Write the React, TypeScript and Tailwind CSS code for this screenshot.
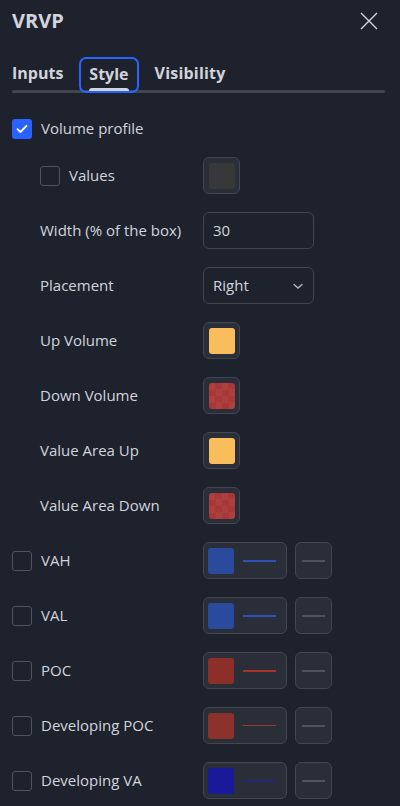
import React from 'react'

type LineRow = { label: string; swatch: string; line: string; thick: boolean }

const lineRows: LineRow[] = [
  { label: 'VAH', swatch: 'bg-[#2a4a9e]', line: 'bg-[#2f50b4]', thick: true },
  { label: 'VAL', swatch: 'bg-[#2a4a9e]', line: 'bg-[#2f50b4]', thick: true },
  { label: 'POC', swatch: 'bg-[#8c2f29]', line: 'bg-[#a9322b]', thick: true },
  { label: 'Developing POC', swatch: 'bg-[#8c322c]', line: 'bg-[#9a3a33]', thick: false },
  { label: 'Developing VA', swatch: 'bg-[#19199a]', line: 'bg-[#2020b0]', thick: false },
]

const Checkbox = ({ checked = false }: { checked?: boolean }) =>
  checked ? (
    <span className="flex h-5 w-5 shrink-0 items-center justify-center rounded-[3px] bg-[#2962ff]">
      <svg width="12" height="10" viewBox="0 0 12 10" fill="none">
        <path d="M1.5 5.2 4.4 8 10.5 1.8" stroke="#fff" strokeWidth="1.8" strokeLinecap="round" strokeLinejoin="round" />
      </svg>
    </span>
  ) : (
    <span className="h-5 w-5 shrink-0 rounded-[3px] border border-[#50535e]" />
  )

const Swatch = ({ inner }: { inner: string }) => (
  <div className="flex h-[37px] w-[37px] items-center justify-center rounded-md border border-[#434651] bg-[#2a2e39]">
    <div className={`h-[26px] w-[26px] rounded-[3px] ${inner}`} />
  </div>
)

const checker =
  'bg-[repeating-conic-gradient(#a83737_0_25%,#ad3f3f_0_50%)] bg-[length:13px_13px]'

const Row = ({ label, children }: { label: string; children: React.ReactNode }) => (
  <div className="flex h-[37px] items-center">
    <span className="w-[203px] shrink-0 pl-[40px]">{label}</span>
    {children}
  </div>
)

const App = () => {
  return (
    <div className="min-h-[806px] w-[400px] overflow-hidden bg-[#1e222d] font-['Open_Sans',sans-serif] text-[15px] text-[#d1d4dc]">
      <header className="flex h-[41px] items-center justify-between px-3">
        <h1 className="text-[20px] font-bold">VRVP</h1>
        <svg width="18" height="18" viewBox="0 0 18 18" className="mr-[10px]">
          <path d="M1 1 17 17M17 1 1 17" stroke="#d1d4dc" strokeWidth="1.4" />
        </svg>
      </header>

      <nav className="relative ml-3 mr-[15px] mt-[16px] flex h-[36px] items-stretch text-[16px] font-bold">
        <div className="absolute inset-x-0 bottom-0 h-[3px] rounded-full bg-[#434651]" />
        <button className="relative flex items-center pb-[4px]">Inputs</button>
        <button className="relative ml-[16px] flex items-center rounded-[7px] border-2 border-[#2962ff] px-[8px] pb-[2px]">
          Style
          <span className="absolute bottom-0 left-[8px] right-[8px] h-[3px] rounded-t bg-[#d1d4dc]" />
        </button>
        <button className="relative ml-[16px] flex items-center pb-[4px] tracking-[0.2px]">Visibility</button>
      </nav>

      <div className="mt-[17px] flex flex-col">
        <div className="flex h-[37px] items-center gap-[9px] px-3">
          <Checkbox checked />
          <span>Volume profile</span>
        </div>

        <div className="mt-[10px] flex flex-col gap-[18px]">
          <div className="flex h-[37px] items-center">
            <div className="flex w-[203px] shrink-0 items-center gap-[9px] pl-[40px]">
              <Checkbox />
              <span>Values</span>
            </div>
            <Swatch inner="bg-[#38383b]" />
          </div>

          <Row label="Width (% of the box)">
            <div className="flex h-[37px] w-[111px] items-center rounded-md border border-[#434651] px-[9px]">30</div>
          </Row>

          <Row label="Placement">
            <div className="flex h-[37px] w-[111px] items-center justify-between rounded-md border border-[#434651] pl-[9px] pr-[9px]">
              <span>Right</span>
              <svg width="12" height="8" viewBox="0 0 12 8" fill="none">
                <path d="M2 2.5 6 6 10 2.5" stroke="#b2b5be" strokeWidth="1.4" strokeLinecap="round" />
              </svg>
            </div>
          </Row>

          <Row label="Up Volume">
            <Swatch inner="bg-[#f9bd5c]" />
          </Row>
          <Row label="Down Volume">
            <Swatch inner={checker} />
          </Row>
          <Row label="Value Area Up">
            <Swatch inner="bg-[#f9bd5c]" />
          </Row>
          <Row label="Value Area Down">
            <Swatch inner={checker} />
          </Row>

          {lineRows.map((r) => (
            <div key={r.label} className="flex h-[37px] items-center">
              <div className="flex w-[203px] shrink-0 items-center gap-[9px] pl-3">
                <Checkbox />
                <span>{r.label}</span>
              </div>
              <div className="flex h-[37px] w-[84px] items-center rounded-md border border-[#434651] bg-[#2a2e39] pl-[4px]">
                <div className={`h-[26px] w-[26px] rounded-[3px] ${r.swatch}`} />
                <div className={`ml-[9px] w-[33px] ${r.thick ? 'h-[2px]' : 'h-px'} ${r.line}`} />
              </div>
              <div className="ml-[8px] flex h-[37px] w-[37px] items-center justify-center rounded-md border border-[#434651] bg-[#2a2e39]">
                <div className="h-[2px] w-[23px] bg-[#50535e]" />
              </div>
            </div>
          ))}
        </div>
      </div>
    </div>
  )
}

export default App
